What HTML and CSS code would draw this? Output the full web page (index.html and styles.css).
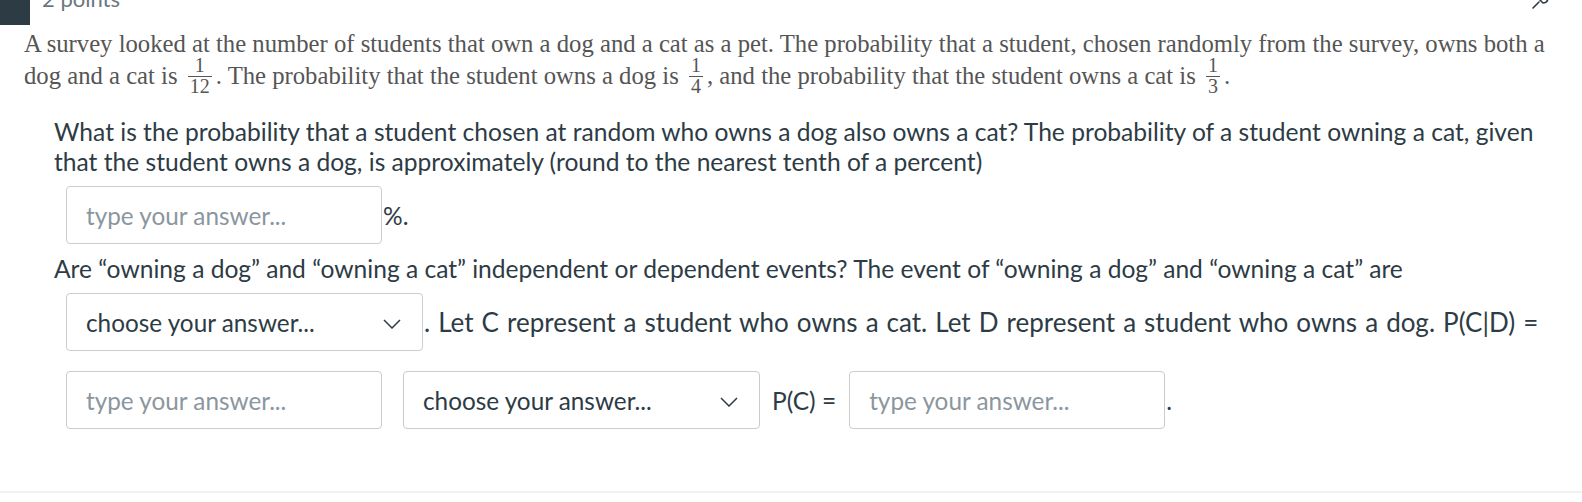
FILE: index.html
```html
<!DOCTYPE html>
<html>
<head>
<meta charset="utf-8">
<link rel="stylesheet" href="styles.css">
</head>
<body>
<div class="page">
  <header class="qhead">
    <div class="tab"></div>
    <span class="points">2 points</span>
    <svg class="pin" width="22" height="22" viewBox="0 0 22 22" fill="none" stroke="#2d3b45" stroke-width="1.6" stroke-linecap="round" stroke-linejoin="round">
      <path d="M2 20 L8 14"/>
      <path d="M5 8 L12 15 Q16 15 17 11 L20 8"/>
    </svg>
  </header>

  <p class="intro">A survey looked at the number of students that own a dog and a cat as a pet. The probability that a student, chosen randomly from the survey, owns both a dog and a cat is <span class="frac"><span class="num">1</span><span class="den">12</span></span>. The probability that the student owns a dog is <span class="frac"><span class="num">1</span><span class="den">4</span></span>, and the probability that the student owns a cat is <span class="frac"><span class="num">1</span><span class="den">3</span></span>.</p>

  <div class="question">
    <p class="qtext">What is the probability that a student chosen at random who owns a dog also owns a cat? The probability of a student owning a cat, given that the student owns a dog, is approximately (round to the nearest tenth of a percent)</p>
    <div class="row">
      <div class="field input">type your answer...</div>
      <span class="after">%.</span>
    </div>
    <p class="qtext single">Are “owning a dog” and “owning a cat” independent or dependent events? The event of “owning a dog” and “owning a cat” are</p>
    <div class="row">
      <div class="field select">choose your answer...<svg class="chev" width="18" height="10" viewBox="0 0 18 10" fill="none" stroke="#2d3b45" stroke-width="1.5"><path d="M1 1 L9 9 L17 1"/></svg></div>
      <span class="after long">. Let C represent a student who owns a cat. Let D represent a student who owns a dog. P(C|D) =</span>
    </div>
    <div class="row row3">
      <div class="field input">type your answer...</div>
      <div class="field select">choose your answer...<svg class="chev" width="18" height="10" viewBox="0 0 18 10" fill="none" stroke="#2d3b45" stroke-width="1.5"><path d="M1 1 L9 9 L17 1"/></svg></div>
      <span class="label">P(C) =</span>
      <div class="field input">type your answer...</div>
      <span class="after">.</span>
    </div>
  </div>
  <div class="bottomline"></div>
</div>
</body>
</html>
```

FILE: styles.css
```css
html, body {
  margin: 0;
  padding: 0;
  background: #fff;
}
.page {
  width: 1582px;
  height: 502px;
  overflow: hidden;
  position: relative;
  font-family: Lato, "Liberation Sans", sans-serif;
  color: #2d3b45;
}
.qhead {
  height: 24px;
  display: flex;
  align-items: flex-start;
  position: relative;
}
.tab {
  width: 30px;
  height: 25px;
  background: #2d3b45;
}
.points {
  margin-left: 12px;
  font-size: 22px;
  line-height: 22px;
  margin-top: -12px;
  color: #6b7780;
}
.pin {
  position: absolute;
  left: 1531px;
  top: -12px;
}
.intro {
  margin: 4px 0 0 24px;
  width: 1545px;
  font-family: "Liberation Serif", "Times New Roman", serif;
  font-size: 24.7px;
  line-height: 31px;
  color: #555;
}
.frac {
  display: inline-block;
  vertical-align: -9px;
  text-align: center;
  font-size: 20px;
  line-height: 17px;
  margin: -2px 4px -2px;
}
.frac .num {
  display: block;
  border-bottom: 1px solid #555;
  padding: 0 2px 2px;
}
.frac .den {
  display: block;
  padding: 1px 2px 0;
}
.question {
  margin: 24px 0 0 54px;
  width: 1500px;
}
.qtext {
  margin: 0;
  font-size: 24.6px;
  line-height: 30px;
  color: #2d3b45;
}
.qtext.single {
  margin-top: 10px;
}
.row {
  display: flex;
  align-items: center;
  margin: 9px 0 0 12px;
}
.row3 {
  margin-top: 20px;
}
.field {
  box-sizing: border-box;
  flex-shrink: 0;
  height: 58px;
  border: 1px solid #c7cdd1;
  border-radius: 4px;
  background: #fff;
  display: flex;
  align-items: center;
  padding-left: 19px;
  font-size: 24.3px;
}
.input {
  width: 316px;
  color: #8b969e;
}
.select {
  width: 357px;
  color: #2d3b45;
  justify-content: space-between;
  padding-right: 21px;
}
.row3 .select {
  margin-left: 21px;
}
.chev {
  display: block;
  margin-top: 3px;
}
.after {
  font-size: 24.5px;
  margin-left: 1px;
  color: #2d3b45;
  white-space: nowrap;
}
.after.long {
  font-size: 26px;
  word-spacing: 1.4px;
  margin-left: 1px;
}
.label {
  font-size: 24.5px;
  margin: 0 13px 0 12px;
}
.bottomline {
  position: absolute;
  left: 0;
  right: 0;
  top: 491px;
  height: 2px;
  background: #f0f1f2;
}
```
